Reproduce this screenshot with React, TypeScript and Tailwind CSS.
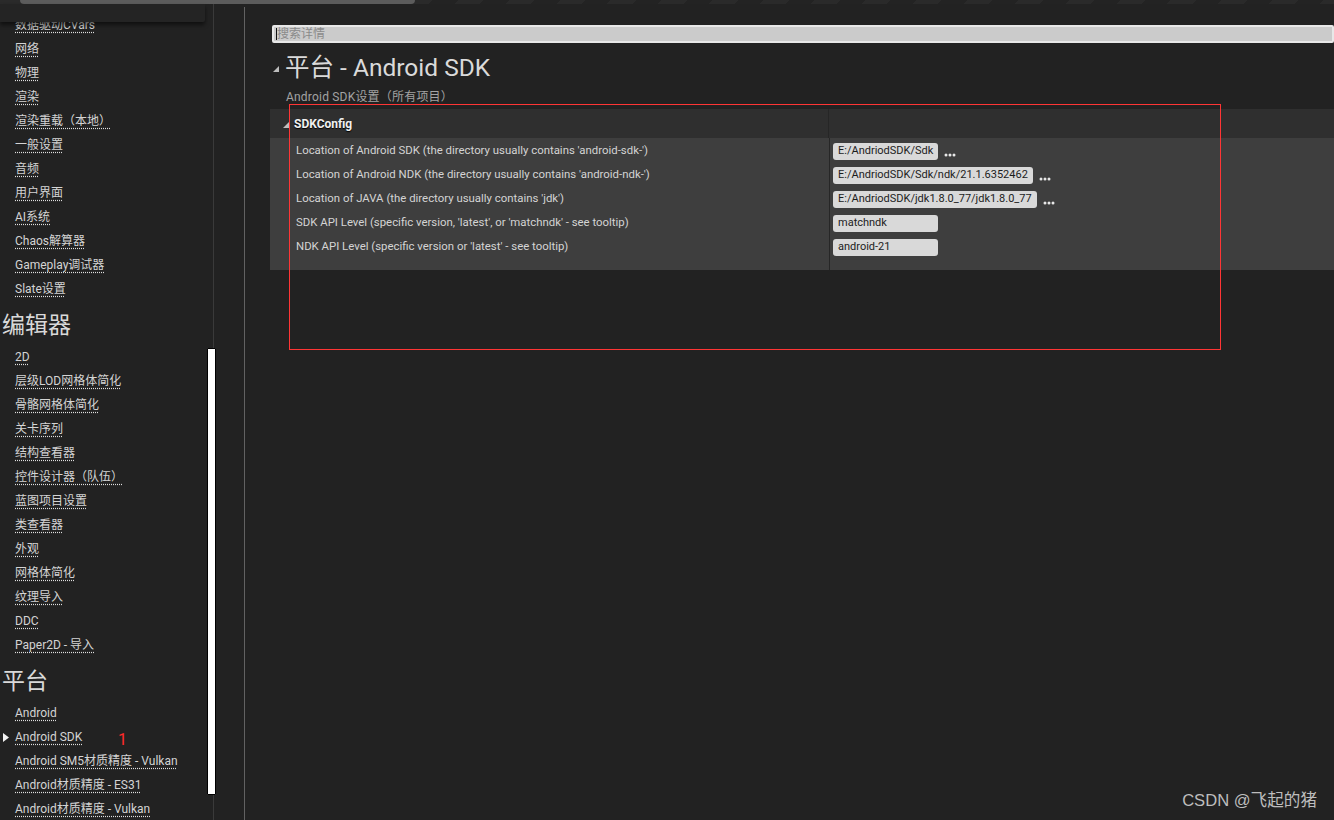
import React from "react";

const FONT = "font-['Roboto','Noto_Sans_CJK_SC',sans-serif]";

type NavEntry = { kind: "item"; label: string; selected?: boolean } | { kind: "heading"; label: string };

const NAV: NavEntry[] = [
  { kind: "item", label: "数据驱动CVars" },
  { kind: "item", label: "网络" },
  { kind: "item", label: "物理" },
  { kind: "item", label: "渲染" },
  { kind: "item", label: "渲染重载（本地）" },
  { kind: "item", label: "一般设置" },
  { kind: "item", label: "音频" },
  { kind: "item", label: "用户界面" },
  { kind: "item", label: "AI系统" },
  { kind: "item", label: "Chaos解算器" },
  { kind: "item", label: "Gameplay调试器" },
  { kind: "item", label: "Slate设置" },
  { kind: "heading", label: "编辑器" },
  { kind: "item", label: "2D" },
  { kind: "item", label: "层级LOD网格体简化" },
  { kind: "item", label: "骨骼网格体简化" },
  { kind: "item", label: "关卡序列" },
  { kind: "item", label: "结构查看器" },
  { kind: "item", label: "控件设计器（队伍）" },
  { kind: "item", label: "蓝图项目设置" },
  { kind: "item", label: "类查看器" },
  { kind: "item", label: "外观" },
  { kind: "item", label: "网格体简化" },
  { kind: "item", label: "纹理导入" },
  { kind: "item", label: "DDC" },
  { kind: "item", label: "Paper2D - 导入" },
  { kind: "heading", label: "平台" },
  { kind: "item", label: "Android" },
  { kind: "item", label: "Android SDK", selected: true },
  { kind: "item", label: "Android SM5材质精度 - Vulkan" },
  { kind: "item", label: "Android材质精度 - ES31" },
  { kind: "item", label: "Android材质精度 - Vulkan" },
];

const ROWS = [
  { label: "Location of Android SDK (the directory usually contains 'android-sdk-')", value: "E:/AndriodSDK/Sdk", browse: true },
  { label: "Location of Android NDK (the directory usually contains 'android-ndk-')", value: "E:/AndriodSDK/Sdk/ndk/21.1.6352462", browse: true },
  { label: "Location of JAVA (the directory usually contains 'jdk')", value: "E:/AndriodSDK/jdk1.8.0_77/jdk1.8.0_77", browse: true },
  { label: "SDK API Level (specific version, 'latest', or 'matchndk' - see tooltip)", value: "matchndk", browse: false },
  { label: "NDK API Level (specific version or 'latest' - see tooltip)", value: "android-21", browse: false },
];

function Expander({ className }: { className?: string }) {
  return (
    <svg width="6" height="6" viewBox="0 0 6 6" className={className}>
      <polygon points="6,0 6,6 0,6" fill="#bdbdbd" />
    </svg>
  );
}

function BrowseDots() {
  return (
    <svg width="12" height="4" viewBox="0 0 12 4" className="ml-[6px] mt-[7px]">
      <circle cx="2" cy="2" r="1.5" fill="#e8e8e8" />
      <circle cx="6" cy="2" r="1.5" fill="#e8e8e8" />
      <circle cx="10" cy="2" r="1.5" fill="#e8e8e8" />
    </svg>
  );
}

function Sidebar() {
  return (
    <div className="relative w-[214px] shrink-0 border-r border-[#3a3a3a] pt-[9px]">
      {NAV.map((entry, i) =>
        entry.kind === "heading" ? (
          <div key={i} className="h-[44px] flex items-center pt-[5px] pl-[2px] text-[23px] text-[#d9d9d9] leading-none">
            {entry.label}
          </div>
        ) : (
          <div key={i} className="relative h-[24px] flex items-center pl-[15px]">
            {entry.selected && (
              <svg width="6" height="9" viewBox="0 0 6 9" className="absolute left-[3px] top-[8px]">
                <polygon points="0,0 6,4.5 0,9" fill="#f2f2f2" />
              </svg>
            )}
            <span className="text-[12px] text-[#d4d4d4] leading-[16px] underline decoration-dotted decoration-[#e0e0e0] underline-offset-[3px]">
              {entry.label}
            </span>
            {entry.selected && (
              <span className="absolute left-[118px] top-[5px] text-[16px] text-[#ff2b2b] leading-[20px]">1</span>
            )}
          </div>
        )
      )}
      {/* scrollbar thumb */}
      <div className="absolute left-[207px] top-[344px] w-[9px] h-[447px] bg-white border border-black rounded-[1px]" />
    </div>
  );
}

function Details() {
  return (
    <div className="flex-1 flex flex-col pl-[25px]">
      <div className="mt-[21px] ml-[2px] h-[18px] rounded-[2px] border-2 border-[#e8e8e8] bg-[#cbcbcb] flex items-center">
        <div className="w-[1px] h-[12px] bg-[#111] ml-[2px]" />
        <span className="text-[12px] text-[#8a8a8a] leading-none">搜索详情</span>
      </div>

      <div className="mt-[9px] h-[32px] flex items-center">
        <Expander className="ml-[3px] mt-[1px]" />
        <span className="ml-[6px] text-[24.5px] text-[#dadada] leading-[32px]">平台 - Android SDK</span>
      </div>
      <div className="mt-[5px] ml-[16px] text-[12px] text-[#a3a3a3] leading-[16px] tracking-[0.2px]">Android SDK设置（所有项目）</div>

      <div className="mt-[4px] flex flex-col">
        <div className="h-[29px] bg-[#2f2f2f] flex">
          <div className="w-[559px] border-r border-[#262626] flex items-center">
            <Expander className="ml-[13px] mt-[2px]" />
            <span className="ml-[5px] text-[12px] font-bold text-[#f0f0f0] [text-shadow:0_1px_1px_#000]">SDKConfig</span>
          </div>
        </div>
        <div className="bg-[#3e3e3e] flex">
          <div className="w-[560px] border-r border-[#262626] pt-[1px] pb-[11px]">
            {ROWS.map((r) => (
              <div key={r.label} className="h-[24px] flex items-center pl-[26px] text-[11.4px] text-[#d4d4d4]">
                {r.label}
              </div>
            ))}
          </div>
          <div className="flex-1 pl-[3px] pt-[1px]">
            {ROWS.map((r) => (
              <div key={r.value} className="h-[24px] flex items-center">
                <div
                  className={`h-[17px] rounded-[3px] bg-[#d9d9d9] px-[5px] flex items-center text-[11px] text-[#1c1c1c] ${r.browse ? "" : "w-[105px]"}`}
                >
                  {r.value}
                </div>
                {r.browse && <BrowseDots />}
              </div>
            ))}
          </div>
        </div>
      </div>
    </div>
  );
}

export default function App() {
  return (
    <div className={`relative w-[1334px] h-[820px] overflow-hidden bg-[#222222] flex flex-col ${FONT}`}>
      <div className="h-[4px] shrink-0 relative bg-[repeating-linear-gradient(135deg,#2a2a2a_0_18px,#232323_18px_36px)]">
        <div className="absolute left-[20px] top-0 w-[395px] h-[4px] bg-[#5c5c5c] rounded-b-[4px]" />
      </div>
      <div className="flex-1 flex">
        <Sidebar />
        <div className="w-[31px] shrink-0 border-r border-[#626262] mt-[3px]" />
        <Details />
      </div>

      {/* shadow strip over the top of the sidebar */}
      <div className="absolute left-0 top-[4px] w-[205px] h-[18px] bg-[#242424] shadow-[0_3px_4px_rgba(0,0,0,0.55)] rounded-br-[2px]" />

      {/* annotation box */}
      <div className="absolute left-[289px] top-[104px] w-[932px] h-[246px] border border-[#ff3535]" />

      <div className="absolute right-[17px] top-[790px] text-[16.6px] text-[#bdbdbd] leading-[22px] font-['Liberation_Sans','Noto_Sans_CJK_SC',sans-serif]">
        CSDN @飞起的猪
      </div>
    </div>
  );
}
